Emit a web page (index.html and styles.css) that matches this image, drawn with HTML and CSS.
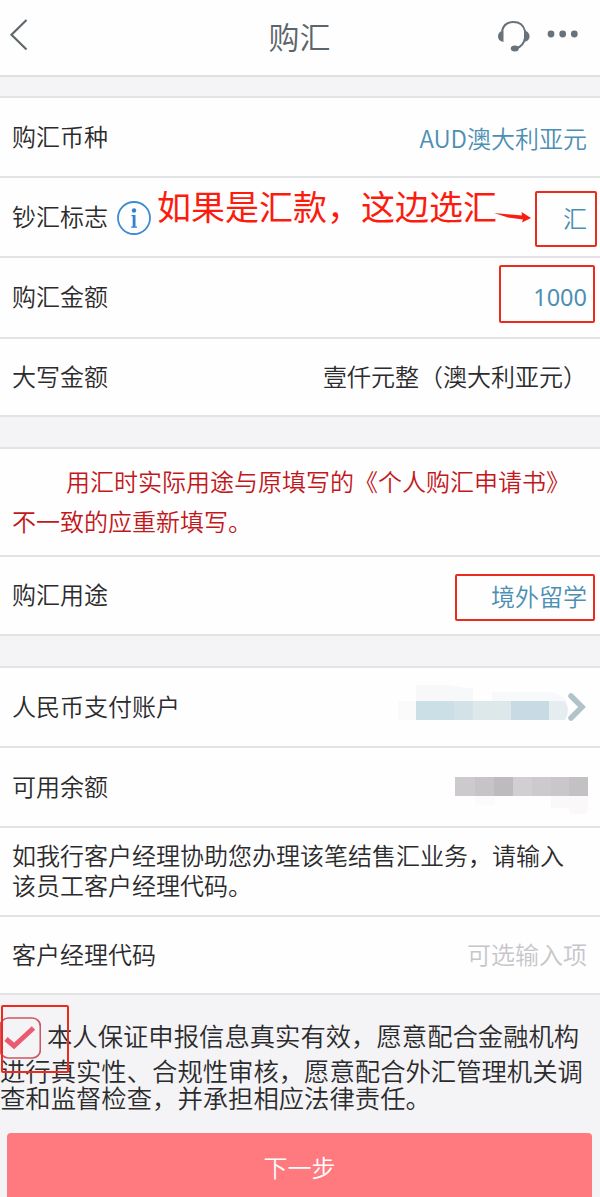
FILE: index.html
```html
<!DOCTYPE html>
<html lang="zh-CN">
<head>
    <meta charset="UTF-8">
    <meta name="viewport" content="width=device-width, initial-scale=1.0">
    <title>购汇</title>
    <link rel="stylesheet" href="styles.css">
</head>
<body>

    <!-- 顶部导航 -->
    <header class="header">
        <svg class="back" width="30" height="40" viewBox="0 0 30 40" fill="none" stroke="#5f686d" stroke-width="2.200">
            <path d="M27.500 5L12.500 19.700L27.500 34.500"/>
        </svg>
        <h1>购汇</h1>
        <div class="header-icons">
            <svg width="34" height="34" viewBox="0 0 34 34" fill="#68727a">
                <path d="M5 13C6.500 6.500 11 4 16.500 4S26.500 7 28 13V20C27 26 24 29 19 30.500" fill="none" stroke="#68727a" stroke-width="2"/>
                <path d="M6.500 12.500V24C3 23.500 1 21.500 1 18.500S3 13 6.500 12.500Z"/>
                <path d="M27 12.500V24C30.500 23.500 32.500 21.500 32.500 18.500S30.500 13 27 12.500Z"/>
                <ellipse cx="17.800" cy="30.500" rx="4" ry="2.900"/>
            </svg>
            <svg width="32" height="8" viewBox="0 0 32 8" fill="#68727a">
                <circle cx="4" cy="4" r="3.400"/>
                <circle cx="15.700" cy="4" r="3.400"/>
                <circle cx="27.300" cy="4" r="3.400"/>
            </svg>
        </div>
    </header>

    <!-- 购汇信息 -->
    <section class="group">
        <div class="row">
            <span>购汇币种</span>
            <span class="value low">AUD澳大利亚元</span>
        </div>
        <div class="row flag">
            <span>钞汇标志</span>
            <svg class="info" width="36" height="36" viewBox="0 0 36 36" fill="#2f83cf">
                <circle cx="18" cy="18" r="16" fill="none" stroke="#3d8bd0" stroke-width="1.800"/>
                <circle cx="18" cy="10.500" r="2.200"/>
                <path d="M15.500 15H19.500V26.500H21V27.800H15.200V26.500H16.700V16.300H15.500Z"/>
            </svg>
            <span class="value low">汇</span>
            <div class="mark mark-flag"></div>
            <div class="tip">如果是汇款，这边选汇</div>
            <svg class="arrow" width="38" height="14" viewBox="0 0 38 14" fill="#fb1c0e">
                <path d="M0 2L28 4.500L27.500 1L37 7L28 11.500L29 8.500L14 6.500Z"/>
            </svg>
        </div>
        <div class="row amount">
            <span>购汇金额</span>
            <span class="value number">1000</span>
            <div class="mark mark-amount"></div>
        </div>
        <div class="row capital">
            <span>大写金额</span>
            <span class="value dark">壹仟元整（澳大利亚元）</span>
        </div>
    </section>

    <!-- 购汇用途 -->
    <section class="group">
        <p class="notice">用汇时实际用途与原填写的《个人购汇申请书》<br>不一致的应重新填写。</p>
        <div class="row usage">
            <span>购汇用途</span>
            <span class="value low">境外留学</span>
            <div class="mark mark-usage"></div>
        </div>
    </section>

    <!-- 付款账户 -->
    <section class="group">
        <div class="row">
            <span>人民币支付账户</span>
            <svg class="account" width="190" height="52" viewBox="0 0 190 52">
                <rect x="1" y="17" width="18" height="19" fill="#fafafb"/>
                <path d="M19 1H50L76 5V17H19Z" fill="#f6f8f9"/>
                <path d="M95 8H150Q167 9 170 18H95Z" fill="#f8f9fa"/>
                <rect x="19" y="17" width="38" height="19" fill="#cbdfe6"/>
                <rect x="57" y="17" width="19" height="19" fill="#d3e2e6"/>
                <rect x="76" y="17" width="38" height="19" fill="#dde8eb"/>
                <rect x="114" y="17" width="38" height="19" fill="#c8dbe4"/>
                <path d="M152 17H168Q174 26 168 36H152Z" fill="#e6edf0"/>
                <path d="M174 12L185 23L174 34" fill="none" stroke="#b1c2c8" stroke-width="5.500" stroke-linecap="round"/>
            </svg>
        </div>
        <div class="row">
            <span>可用余额</span>
            <svg class="balance" width="133" height="38" viewBox="0 0 133 38">
                <rect x="20" y="19" width="20" height="9" fill="#fcfafb"/>
                <path d="M96 19H133V33Q132 37 127 37H118Q114 37 114 33V31H96Z" fill="#faf8f9"/>
                <rect width="133" height="19" fill="#cccacc"/>
                <rect x="20" width="19" height="19" fill="#c6c4c6"/>
                <rect x="39" width="19" height="19" fill="#bdbbbd"/>
                <rect x="58" width="19" height="19" fill="#d1cfd1"/>
                <rect x="96" width="18" height="19" fill="#c9c7c9"/>
                <rect x="114" width="19" height="19" fill="#c3c1c4"/>
            </svg>
        </div>
        <p class="manager-tip">如我行客户经理协助您办理该笔结售汇业务，请输入<br>该员工客户经理代码。</p>
        <div class="row manager">
            <span>客户经理代码</span>
            <span class="value placeholder">可选输入项</span>
        </div>
    </section>

    <!-- 声明与提交 -->
    <div class="consent">
        <div class="consent-first">
            <svg width="41" height="42" viewBox="0 0 41 42" fill="none">
                <rect x=".3" y="1" width="40" height="40" rx="8" stroke="#ce5665" stroke-width="1.700"/>
                <path d="M6 22L14 29L33.500 11" stroke="#ec5a70" stroke-width="5"/>
            </svg>
            <span>本人保证申报信息真实有效，愿意配合金融机构</span>
        </div>
        <div>进行真实性、合规性审核，愿意配合外汇管理机关调</div>
        <div>查和监督检查，并承担相应法律责任。</div>
        <div class="mark mark-check"></div>
    </div>
    <button class="next" type="button">下一步</button>

</body>
</html>
```
FILE: styles.css
```css
* {
    box-sizing: border-box;
}

body {
    margin: 0;
    height: 1197px;
    overflow: hidden;
    background: #f4f3f5;
    color: #2b2b2d;
    font-family: "Noto Sans CJK SC", sans-serif;
    font-size: 24px;
    font-weight: 350;
    line-height: 30px;
}

/* 顶部导航 */
.header {
    display: grid;
    grid-template-columns: 1fr auto 1fr;
    align-items: center;
    height: 77px;
    padding: 0 21px 6px 0;
    background: #fefefe;
    border-bottom: 2px solid #dfdfe0;
}

.back {
    margin-left: -1px;
}

.header h1 {
    margin: 2px -10px 0 10px;
    font-size: 31px;
    font-weight: 350;
    line-height: 40px;
    color: #5c656a;
}

.header-icons {
    display: flex;
    justify-content: flex-end;
    align-items: center;
    gap: 16px;
}

.header-icons svg {
    margin-top: -2px;
}

.header-icons svg:first-child {
    margin-top: 0;
}

/* 表单分组 */
.group {
    margin-top: 30px;
    background: #fefefe;
    border-top: 2px solid #e3e2e5;
}

.header + .group {
    margin-top: 19px;
}

.row {
    position: relative;
    display: flex;
    align-items: center;
    height: 80px;
    padding: 0 13px 3px 12px;
    border-bottom: 2px solid #e3e2e5;
}

.amount {
    height: 81px;
}

.capital,
.manager {
    height: 78px;
}

.usage {
    height: 79px;
}

.value {
    margin-left: auto;
    color: #4d8fb3;
}

.low {
    padding-top: 4px;
}

.number {
    padding-top: 1px;
    font-family: "Noto Sans", sans-serif;
    font-weight: 400;
    font-size: 23.5px;
}

.dark {
    color: #2b2b2d;
}

.placeholder {
    color: #c6c6ca;
}

.info {
    margin: 4px 0 0 8px;
}

.account {
    margin: 8px 0 0 auto;
}

.balance {
    margin: 20px -1px 0 auto;
}

.notice,
.manager-tip {
    margin: 0;
    padding: 12px 12px 0;
    border-bottom: 2px solid #e3e2e5;
    white-space: nowrap;
}

.notice {
    height: 108px;
    line-height: 40px;
    text-indent: 54px;
    color: #c2181c;
}

.manager-tip {
    height: 89px;
}

/* 红色标注 */
.mark {
    position: absolute;
    border: 2px solid #ed2a1e;
    border-radius: 2px;
}

.mark-flag {
    left: 535px;
    top: 13px;
    width: 62px;
    height: 56px;
}

.mark-amount {
    left: 499px;
    top: 7px;
    width: 96px;
    height: 58px;
}

.mark-usage {
    left: 455px;
    top: 17px;
    width: 140px;
    height: 47px;
}

.mark-check {
    left: 1px;
    top: 10px;
    width: 68px;
    height: 68px;
}

.tip {
    position: absolute;
    left: 157px;
    top: 8px;
    font-size: 34px;
    font-weight: 400;
    line-height: 40px;
    color: #fb1c0e;
    white-space: nowrap;
}

.arrow {
    position: absolute;
    left: 494px;
    top: 33px;
}

/* 声明与提交 */
.consent {
    position: relative;
    height: 138px;
    padding-top: 22px;
    font-size: 25.35px;
    line-height: 27px;
    white-space: nowrap;
}

.consent-first {
    display: flex;
    align-items: center;
    gap: 6px;
    height: 41px;
}

.consent-first span {
    margin-top: -4px;
}

.consent-first + div {
    margin-top: -1px;
}

.next {
    display: block;
    width: 585px;
    height: 70px;
    margin-left: 7px;
    padding: 0 0 2px;
    border: none;
    border-radius: 4px 4px 0 0;
    background: #ff7a7e;
    color: #fff;
    font: inherit;
}
```
